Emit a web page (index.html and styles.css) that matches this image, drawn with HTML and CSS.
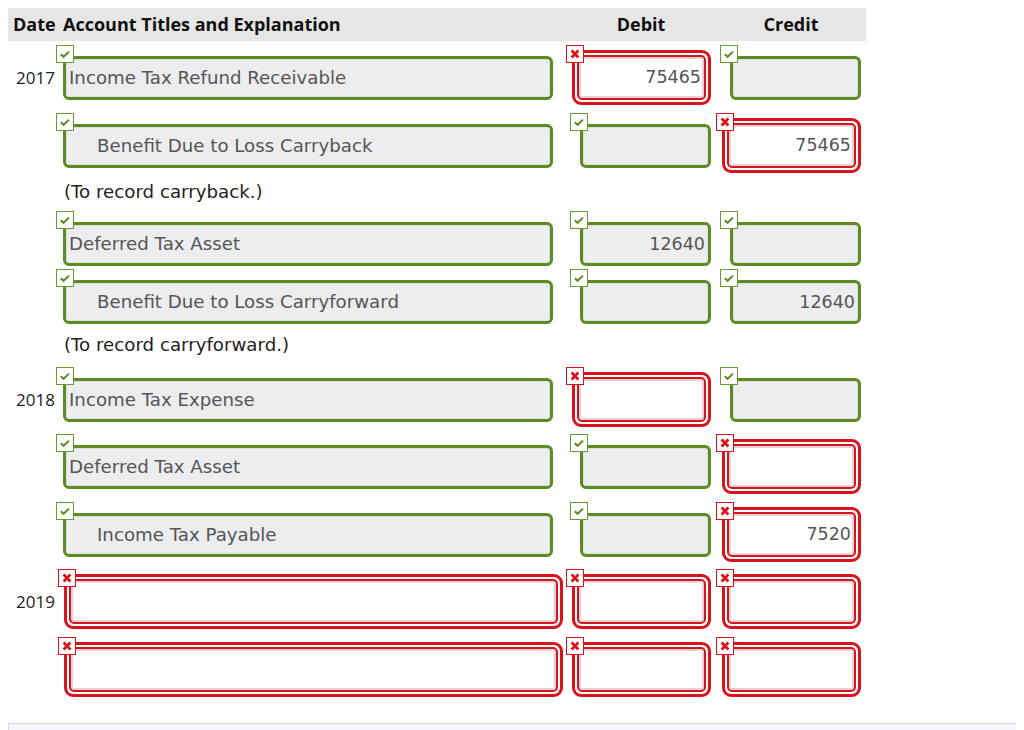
FILE: index.html
```html
<!DOCTYPE html>
<html>
<head>
<meta charset="utf-8">
<link rel="stylesheet" href="styles.css">
</head>
<body>
<div class="sheet">
  <div class="head">
    <div class="h-date">Date</div>
    <div class="h-acct">Account Titles and Explanation</div>
    <div class="h-num">Debit</div>
    <div class="h-num">Credit</div>
  </div>

  <div class="row">
    <div class="date">2017</div>
    <div class="cell acct ok"><span class="badge gb"><svg viewBox="0 0 16 16"><path d="M3.8 8.2 L6.6 10.8 L12 5.6"/></svg></span><div class="box">Income Tax Refund Receivable</div></div>
    <div class="cell num bad"><span class="badge rb"><svg viewBox="0 0 16 16"><path d="M4.6 4.6 L11.4 11.4 M11.4 4.6 L4.6 11.4"/></svg></span><div class="rbox"><div class="rin">75465</div></div></div>
    <div class="cell num ok"><span class="badge gb"><svg viewBox="0 0 16 16"><path d="M3.8 8.2 L6.6 10.8 L12 5.6"/></svg></span><div class="box"></div></div>
  </div>

  <div class="row">
    <div class="date"></div>
    <div class="cell acct ok"><span class="badge gb"><svg viewBox="0 0 16 16"><path d="M3.8 8.2 L6.6 10.8 L12 5.6"/></svg></span><div class="box indent">Benefit Due to Loss Carryback</div><div class="memo first">(To record carryback.)</div></div>
    <div class="cell num ok"><span class="badge gb"><svg viewBox="0 0 16 16"><path d="M3.8 8.2 L6.6 10.8 L12 5.6"/></svg></span><div class="box"></div></div>
    <div class="cell num bad"><span class="badge rb"><svg viewBox="0 0 16 16"><path d="M4.6 4.6 L11.4 11.4 M11.4 4.6 L4.6 11.4"/></svg></span><div class="rbox"><div class="rin">75465</div></div></div>
  </div>

  <div class="row">
    <div class="date"></div>
    <div class="cell acct ok"><span class="badge gb"><svg viewBox="0 0 16 16"><path d="M3.8 8.2 L6.6 10.8 L12 5.6"/></svg></span><div class="box">Deferred Tax Asset</div></div>
    <div class="cell num ok"><span class="badge gb"><svg viewBox="0 0 16 16"><path d="M3.8 8.2 L6.6 10.8 L12 5.6"/></svg></span><div class="box">12640</div></div>
    <div class="cell num ok"><span class="badge gb"><svg viewBox="0 0 16 16"><path d="M3.8 8.2 L6.6 10.8 L12 5.6"/></svg></span><div class="box"></div></div>
  </div>

  <div class="row">
    <div class="date"></div>
    <div class="cell acct ok"><span class="badge gb"><svg viewBox="0 0 16 16"><path d="M3.8 8.2 L6.6 10.8 L12 5.6"/></svg></span><div class="box indent">Benefit Due to Loss Carryforward</div><div class="memo">(To record carryforward.)</div></div>
    <div class="cell num ok"><span class="badge gb"><svg viewBox="0 0 16 16"><path d="M3.8 8.2 L6.6 10.8 L12 5.6"/></svg></span><div class="box"></div></div>
    <div class="cell num ok"><span class="badge gb"><svg viewBox="0 0 16 16"><path d="M3.8 8.2 L6.6 10.8 L12 5.6"/></svg></span><div class="box">12640</div></div>
  </div>

  <div class="row">
    <div class="date">2018</div>
    <div class="cell acct ok"><span class="badge gb"><svg viewBox="0 0 16 16"><path d="M3.8 8.2 L6.6 10.8 L12 5.6"/></svg></span><div class="box">Income Tax Expense</div></div>
    <div class="cell num bad"><span class="badge rb"><svg viewBox="0 0 16 16"><path d="M4.6 4.6 L11.4 11.4 M11.4 4.6 L4.6 11.4"/></svg></span><div class="rbox"><div class="rin"></div></div></div>
    <div class="cell num ok"><span class="badge gb"><svg viewBox="0 0 16 16"><path d="M3.8 8.2 L6.6 10.8 L12 5.6"/></svg></span><div class="box"></div></div>
  </div>

  <div class="row">
    <div class="date"></div>
    <div class="cell acct ok"><span class="badge gb"><svg viewBox="0 0 16 16"><path d="M3.8 8.2 L6.6 10.8 L12 5.6"/></svg></span><div class="box">Deferred Tax Asset</div></div>
    <div class="cell num ok"><span class="badge gb"><svg viewBox="0 0 16 16"><path d="M3.8 8.2 L6.6 10.8 L12 5.6"/></svg></span><div class="box"></div></div>
    <div class="cell num bad"><span class="badge rb"><svg viewBox="0 0 16 16"><path d="M4.6 4.6 L11.4 11.4 M11.4 4.6 L4.6 11.4"/></svg></span><div class="rbox"><div class="rin"></div></div></div>
  </div>

  <div class="row">
    <div class="date"></div>
    <div class="cell acct ok"><span class="badge gb"><svg viewBox="0 0 16 16"><path d="M3.8 8.2 L6.6 10.8 L12 5.6"/></svg></span><div class="box indent">Income Tax Payable</div></div>
    <div class="cell num ok"><span class="badge gb"><svg viewBox="0 0 16 16"><path d="M3.8 8.2 L6.6 10.8 L12 5.6"/></svg></span><div class="box"></div></div>
    <div class="cell num bad"><span class="badge rb"><svg viewBox="0 0 16 16"><path d="M4.6 4.6 L11.4 11.4 M11.4 4.6 L4.6 11.4"/></svg></span><div class="rbox"><div class="rin">7520</div></div></div>
  </div>

  <div class="row">
    <div class="date">2019</div>
    <div class="cell acct bad"><span class="badge rb"><svg viewBox="0 0 16 16"><path d="M4.6 4.6 L11.4 11.4 M11.4 4.6 L4.6 11.4"/></svg></span><div class="rbox"><div class="rin"></div></div></div>
    <div class="cell num bad"><span class="badge rb"><svg viewBox="0 0 16 16"><path d="M4.6 4.6 L11.4 11.4 M11.4 4.6 L4.6 11.4"/></svg></span><div class="rbox"><div class="rin"></div></div></div>
    <div class="cell num bad"><span class="badge rb"><svg viewBox="0 0 16 16"><path d="M4.6 4.6 L11.4 11.4 M11.4 4.6 L4.6 11.4"/></svg></span><div class="rbox"><div class="rin"></div></div></div>
  </div>

  <div class="row">
    <div class="date"></div>
    <div class="cell acct bad"><span class="badge rb"><svg viewBox="0 0 16 16"><path d="M4.6 4.6 L11.4 11.4 M11.4 4.6 L4.6 11.4"/></svg></span><div class="rbox"><div class="rin"></div></div></div>
    <div class="cell num bad"><span class="badge rb"><svg viewBox="0 0 16 16"><path d="M4.6 4.6 L11.4 11.4 M11.4 4.6 L4.6 11.4"/></svg></span><div class="rbox"><div class="rin"></div></div></div>
    <div class="cell num bad"><span class="badge rb"><svg viewBox="0 0 16 16"><path d="M4.6 4.6 L11.4 11.4 M11.4 4.6 L4.6 11.4"/></svg></span><div class="rbox"><div class="rin"></div></div></div>
  </div>
</div>
<div class="footbar"></div>
</body>
</html>
```

FILE: styles.css
```css
html, body {
  background: #ffffff;
}
body {
  margin: 8px;
  font-family: "DejaVu Sans", Verdana, sans-serif;
  overflow: hidden;
}
.sheet {
  width: 858px;
}
.head {
  display: grid;
  grid-template-columns: 47px 511px 150px 150px;
  height: 33px;
  background: #e6e6e6;
  margin-bottom: 4px;
  font-family: "Open Sans", "Liberation Sans", sans-serif;
  font-weight: 700;
  font-size: 18px;
  line-height: 33px;
  color: #111;
}
.h-date {
  padding-left: 5px;
}
.h-acct {
  padding-left: 8px;
  white-space: nowrap;
}
.h-num {
  text-align: center;
}
.row {
  display: grid;
  grid-template-columns: 47px 511px 150px 150px;
  align-items: start;
}
.date {
  font-family: "Open Sans", "Liberation Sans", sans-serif;
  font-size: 17px;
  color: #222;
  text-align: right;
  padding-top: 23px;
  line-height: 20px;
}
.cell {
  position: relative;
}
.cell.ok {
  padding-top: 11px;
  padding-bottom: 3px;
}
.cell.bad {
  padding-top: 5px;
  padding-bottom: 7.5px;
}
.box {
  box-sizing: border-box;
  height: 44px;
  border: 3px solid #5c8c22;
  border-radius: 6px;
  background: #ebedef;
  box-shadow: inset 0 0 0 1px #dcdfe2;
  font-size: 18.2px;
  color: #555;
  line-height: 38px;
  padding: 0 3px;
  white-space: nowrap;
  overflow: hidden;
}
.box.indent {
  padding-left: 31px;
}
.num .box, .num .rin {
  text-align: right;
  font-size: 17.5px;
}
.rbox {
  box-sizing: border-box;
  height: 55px;
  border: 3px solid #d7141c;
  border-radius: 9px;
  padding: 2px;
  background: #fff;
}
.rin {
  box-sizing: border-box;
  height: 100%;
  border: 2px solid #d7141c;
  border-radius: 5px;
  background: #fff;
  box-shadow: inset 0 0 0 2px #e6d2d4;
  font-size: 17.5px;
  color: #555;
  line-height: 41px;
  padding: 0 3px;
  white-space: nowrap;
}
.acct.ok .box {
  margin-left: 8px;
  width: 490px;
}
.acct.bad .rbox {
  margin-left: 9px;
  width: 499px;
}
.num.ok .box {
  margin-left: 14px;
  width: 131px;
}
.num.bad .rbox {
  margin-left: 6px;
  width: 139px;
}
.memo {
  margin-left: 9px;
  padding-top: 4px;
  line-height: 34px;
  height: 36px;
  font-size: 18.2px;
  color: #222;
  white-space: nowrap;
}
.memo.first {
  padding-top: 7px;
  height: 33px;
}
.badge {
  position: absolute;
  top: 0;
  box-sizing: border-box;
  width: 18px;
  height: 18px;
  background: #fff;
  z-index: 2;
}
.badge svg {
  display: block;
  width: 100%;
  height: 100%;
  fill: none;
}
.gb {
  border: 1.5px solid #6a9a34;
}
.gb path {
  stroke: #5c8c22;
  stroke-width: 2;
}
.rb {
  border: 1.5px solid #d7141c;
}
.rb path {
  stroke: #d7141c;
  stroke-width: 2.8;
}
.acct.ok .badge { left: 1px; }
.acct.bad .badge { left: 3px; }
.num.ok .badge { left: 4px; }
.num.bad .badge { left: 0; }
.footbar {
  margin-top: 19px;
  margin-right: -8px;
  height: 12px;
  border-top: 1px solid #d3dae3;
  border-left: 1px solid #d3dae3;
  background: #f4f6f9;
}
```
